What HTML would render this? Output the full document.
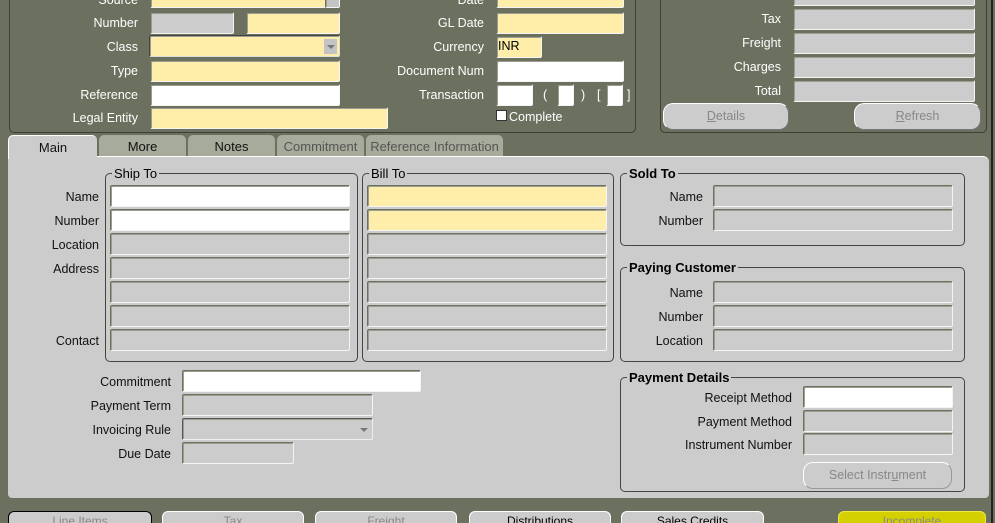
<!DOCTYPE html>
<html style="overflow:hidden;width:995px;height:523px"><head><meta charset="utf-8">
<style>
*{box-sizing:border-box;margin:0;padding:0}
body{width:995px;height:523px;overflow:hidden;background:#6b705f;font-family:"Liberation Sans",sans-serif;font-size:12.5px;position:relative}
.a{position:absolute}
.f{position:absolute;height:22px;border:1px solid;border-color:#6b705f #f4f4f4 #f4f4f4 #6b705f;box-shadow:inset 1px 1px 0 #9a9d90;background:#cccccc;border-radius:2px}
.y{background:#ffeeaa}
.w{background:#fff}
.l{position:absolute;text-align:right;color:#fff;white-space:nowrap}
.d{position:absolute;text-align:right;color:#111;white-space:nowrap}
.g{position:absolute;border:1px solid #444;border-radius:5px}
.gt{position:absolute;background:#cccccc;padding:0 2px;color:#000;top:-8px;left:6px;line-height:15px;font-size:13px}
.b{position:absolute;background:#cccccc;border:1px solid #fff;border-right-color:#777;border-bottom-color:#777;border-radius:10px;text-align:center;color:#888;line-height:24px}
.tab{position:absolute;top:135px;height:22px;background:#a7ab9b;border-radius:5px 5px 0 0;text-align:center;line-height:24px;color:#111;font-size:13px}
.arr{position:absolute;right:2px;top:3px;width:13px;height:15px;background:#c4c4c4}
.arr:after{content:"";position:absolute;left:3px;top:6px;border:4px solid transparent;border-top:4px solid #777;border-bottom:0}
.bb{position:absolute;top:511px;height:12px;background:#cccccc;border-radius:6px 6px 0 0;border:1px solid #fff;border-bottom:none;text-align:center;font-size:12px;line-height:18px;color:#888;overflow:hidden}
</style></head><body>
<div class="a" style="left:9px;top:-10px;width:627px;height:143px;border:1px solid #3d3f36;border-top:none;border-radius:0 0 5px 5px"></div>
<div class="l" style="left:0;width:138px;top:-7px">Source</div>
<div class="f y" style="left:150px;top:-14px;width:176px"></div>
<div class="f" style="left:325px;top:-14px;width:15px;background:#c4c4c4"></div>
<div class="l" style="left:0;width:138px;top:16px">Number</div>
<div class="f" style="left:150px;top:12px;width:84px"></div>
<div class="f y" style="left:246px;top:12px;width:94px"></div>
<div class="l" style="left:0;width:138px;top:40px">Class</div>
<div class="f y" style="left:149px;top:35px;width:191px;border-color:#444 #ddd #ddd #444"><div class="arr"></div></div>
<div class="l" style="left:0;width:138px;top:64px">Type</div>
<div class="f y" style="left:150px;top:60px;width:190px"></div>
<div class="l" style="left:0;width:138px;top:88px">Reference</div>
<div class="f w" style="left:150px;top:84px;width:190px"></div>
<div class="l" style="left:0;width:138px;top:111px">Legal Entity</div>
<div class="f y" style="left:150px;top:107px;width:238px"></div>

<div class="l" style="left:380px;width:104px;top:-7px">Date</div>
<div class="f y" style="left:496px;top:-14px;width:128px;padding-left:2px;color:#000;line-height:18px">22-NOV-2016</div>
<div class="l" style="left:380px;width:104px;top:16px">GL Date</div>
<div class="f y" style="left:496px;top:12px;width:128px"></div>
<div class="l" style="left:380px;width:104px;top:40px">Currency</div>
<div class="f y" style="left:496px;top:36px;width:46px;padding-left:1px;line-height:19px;color:#000">INR</div>
<div class="l" style="left:380px;width:104px;top:64px">Document Num</div>
<div class="f w" style="left:496px;top:60px;width:128px"></div>
<div class="l" style="left:380px;width:104px;top:88px">Transaction</div>
<div class="f w" style="left:496px;top:84px;width:37px"></div>
<div class="l" style="left:543px;top:88px">(</div>
<div class="f w" style="left:557px;top:84px;width:17px"></div>
<div class="l" style="left:581px;top:88px">)</div>
<div class="l" style="left:597px;top:88px">[</div>
<div class="f w" style="left:606px;top:84px;width:17px"></div>
<div class="l" style="left:627px;top:88px">]</div>
<div class="a" style="left:496px;top:110px;width:11px;height:11px;background:#fff;border:1px solid #333"></div>
<div class="l" style="left:509px;top:110px">Complete</div>

<div class="a" style="left:660px;top:-10px;width:327px;height:143px;border:1px solid #3d3f36;border-top:none;border-radius:0 0 5px 5px"></div>
<div class="a" style="left:991px;top:0;width:2px;height:523px;background:#222"></div>
<div class="f" style="left:793px;top:-16px;width:182px"></div>
<div class="l" style="left:680px;width:101px;top:12px">Tax</div>
<div class="f" style="left:793px;top:8px;width:182px"></div>
<div class="l" style="left:680px;width:101px;top:36px">Freight</div>
<div class="f" style="left:793px;top:32px;width:182px"></div>
<div class="l" style="left:680px;width:101px;top:60px">Charges</div>
<div class="f" style="left:793px;top:56px;width:182px"></div>
<div class="l" style="left:680px;width:101px;top:84px">Total</div>
<div class="f" style="left:793px;top:80px;width:182px"></div>
<div class="b" style="left:663px;top:103px;width:126px;height:27px"><u>D</u>etails</div>
<div class="b" style="left:854px;top:103px;width:127px;height:27px"><u>R</u>efresh</div>

<div class="tab" style="left:99px;width:87px">More</div>
<div class="tab" style="left:188px;width:87px">Notes</div>
<div class="tab" style="left:277px;width:87px;color:#555">Commitment</div>
<div class="tab" style="left:366px;width:137px;color:#555">Reference Information</div>
<div class="a" style="left:8px;top:156px;width:981px;height:342px;background:#cccccc;border-radius:0 6px 4px 4px;border-top:1px solid #fff"></div>
<div class="tab" style="left:8px;width:89px;height:24px;background:#cccccc;border-top:1px solid #fff;border-left:1px solid #fff">Main</div>

<div class="g" style="left:105px;top:173px;width:253px;height:189px"><span class="gt">Ship To</span></div>
<div class="g" style="left:362px;top:173px;width:252px;height:189px"><span class="gt">Bill To</span></div>
<div class="g" style="left:620px;top:173px;width:345px;height:73px"><span class="gt" style="font-weight:bold">Sold To</span></div>
<div class="g" style="left:620px;top:267px;width:345px;height:95px"><span class="gt" style="font-weight:bold">Paying Customer</span></div>
<div class="g" style="left:620px;top:377px;width:345px;height:115px"><span class="gt" style="font-weight:bold">Payment Details</span></div>

<div class="d" style="left:0;width:99px;top:190px">Name</div>
<div class="d" style="left:0;width:99px;top:214px">Number</div>
<div class="d" style="left:0;width:99px;top:238px">Location</div>
<div class="d" style="left:0;width:99px;top:262px">Address</div>
<div class="d" style="left:0;width:99px;top:334px">Contact</div>
<div class="f w" style="left:110px;top:185px;width:240px"></div>
<div class="f w" style="left:110px;top:209px;width:240px"></div>
<div class="f" style="left:110px;top:233px;width:240px"></div>
<div class="f" style="left:110px;top:257px;width:240px"></div>
<div class="f" style="left:110px;top:281px;width:240px"></div>
<div class="f" style="left:110px;top:305px;width:240px"></div>
<div class="f" style="left:110px;top:329px;width:240px"></div>
<div class="f y" style="left:367px;top:185px;width:240px"></div>
<div class="f y" style="left:367px;top:209px;width:240px"></div>
<div class="f" style="left:367px;top:233px;width:240px"></div>
<div class="f" style="left:367px;top:257px;width:240px"></div>
<div class="f" style="left:367px;top:281px;width:240px"></div>
<div class="f" style="left:367px;top:305px;width:240px"></div>
<div class="f" style="left:367px;top:329px;width:240px"></div>

<div class="d" style="left:600px;width:103px;top:190px">Name</div>
<div class="d" style="left:600px;width:103px;top:214px">Number</div>
<div class="f" style="left:713px;top:185px;width:240px"></div>
<div class="f" style="left:713px;top:209px;width:240px"></div>
<div class="d" style="left:600px;width:103px;top:286px">Name</div>
<div class="d" style="left:600px;width:103px;top:310px">Number</div>
<div class="d" style="left:600px;width:103px;top:334px">Location</div>
<div class="f" style="left:713px;top:281px;width:240px"></div>
<div class="f" style="left:713px;top:305px;width:240px"></div>
<div class="f" style="left:713px;top:329px;width:240px"></div>

<div class="d" style="left:620px;width:172px;top:391px">Receipt Method</div>
<div class="d" style="left:620px;width:172px;top:415px">Payment Method</div>
<div class="d" style="left:620px;width:172px;top:438px">Instrument Number</div>
<div class="f w" style="left:803px;top:386px;width:150px"></div>
<div class="f" style="left:803px;top:410px;width:150px"></div>
<div class="f" style="left:803px;top:433px;width:150px"></div>
<div class="b" style="left:803px;top:462px;width:149px;height:27px;border-color:#fff #999 #999 #fff">Select Instr<u>u</u>ment</div>

<div class="d" style="left:60px;width:111px;top:375px">Commitment</div>
<div class="d" style="left:60px;width:111px;top:399px">Payment Term</div>
<div class="d" style="left:60px;width:111px;top:423px">Invoicing Rule</div>
<div class="d" style="left:60px;width:111px;top:447px">Due Date</div>
<div class="f w" style="left:182px;top:370px;width:239px"></div>
<div class="f" style="left:182px;top:394px;width:191px"></div>
<div class="f" style="left:182px;top:418px;width:191px;border-color:#555 #eee #eee #555"><div class="arr" style="background:transparent"></div></div>
<div class="f" style="left:182px;top:442px;width:112px"></div>

<div class="bb" style="left:8px;width:144px;border:1px solid #000;border-bottom:none">Line Items</div>
<div class="bb" style="left:162px;width:142px">Tax</div>
<div class="bb" style="left:315px;width:142px">Freight</div>
<div class="bb" style="left:469px;width:142px;color:#000">Distributions</div>
<div class="bb" style="left:621px;width:143px;color:#000">Sales Credits</div>
<div class="bb" style="left:838px;width:148px;background:#d4d000;border-color:#eeea40;color:#888">Incomplete</div>
</body></html>
